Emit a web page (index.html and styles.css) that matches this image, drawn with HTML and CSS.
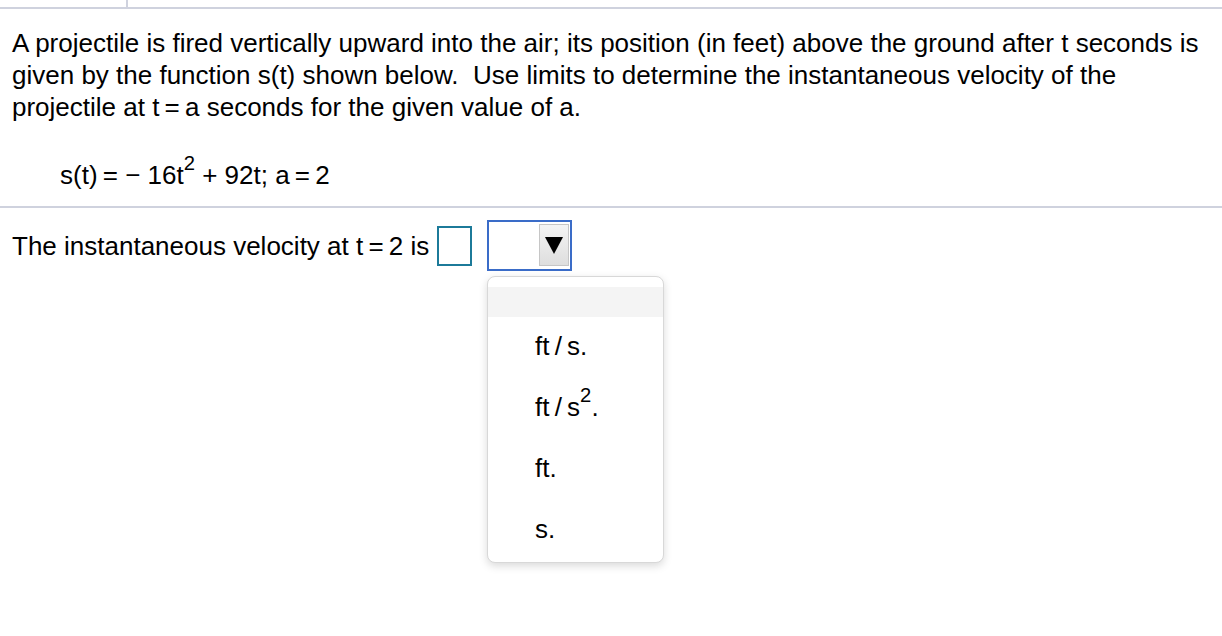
FILE: index.html
```html
<!DOCTYPE html>
<html lang="en">
<head>
    <meta charset="UTF-8">
    <title>Instantaneous velocity</title>
    <link rel="stylesheet" href="styles.css">
</head>
<body>
    <div class="topbar">
        <span class="tab"></span>
    </div>

    <div class="question">
        <p class="prompt">A projectile is fired vertically upward into the air; its position (in feet) above the ground after t seconds is given by the function s(t) shown below.&nbsp; Use limits to determine the instantaneous velocity of the projectile at t&#8201;=&#8201;a seconds for the given value of a.</p>
        <p class="formula">s(t)&#8201;= &minus; 16t<sup>2</sup> + 92t; a&#8201;=&#8201;2</p>
    </div>

    <div class="answer">
        <div class="answer-row">
            <span class="answer-text">The instantaneous velocity at t&#8201;=&#8201;2 is</span>
            <span class="blank"></span>
            <span class="select">
                <span class="arrow"><span class="tri"></span></span>
            </span>
        </div>

        <ul class="menu">
            <li class="item active"></li>
            <li class="item">ft&#8201;/&#8201;s.</li>
            <li class="item">ft&#8201;/&#8201;s<sup>2</sup>.</li>
            <li class="item">ft.</li>
            <li class="item">s.</li>
        </ul>
    </div>
</body>
</html>
```

FILE: styles.css
```css
body {
    margin: 0;
    min-height: 636px;
    font-family: "Liberation Sans", Arial, sans-serif;
    color: #000;
    background: #fff;
}

.topbar {
    position: relative;
    height: 7px;
    border-bottom: 2px solid #cfd2de;
}

.tab {
    position: absolute;
    left: 126px;
    top: 0;
    width: 2px;
    height: 7px;
    background: #cfd2de;
}

.question {
    padding: 0 12px;
    border-bottom: 2px solid #cfd2de;
}

.prompt {
    margin: 0;
    padding-top: 18px;
    font-size: 26px;
    line-height: 32px;
}

.formula {
    margin: 0;
    padding: 36px 0 15px 48px;
    font-size: 26px;
    line-height: 32px;
}

sup {
    font-size: 0.78em;
    line-height: 0;
    vertical-align: 0.68em;
}

.answer {
    position: relative;
    min-height: 420px;
    padding: 12px 12px;
    font-size: 26px;
}

.answer-row {
    display: flex;
    align-items: center;
}

.answer-text {
    line-height: 32px;
}

.blank {
    width: 31px;
    height: 36px;
    margin-left: 8px;
    border: 2px solid #1c7a99;
}

.select {
    display: flex;
    justify-content: flex-end;
    align-items: flex-start;
    width: 81px;
    height: 47px;
    margin-left: 15px;
    border: 2px solid #3a6cc8;
}

.arrow {
    display: flex;
    justify-content: center;
    align-items: center;
    width: 30px;
    height: 42px;
    margin: 2px 1px 0 0;
    background: linear-gradient(#f4f4f4, #dedede);
    border: 1px solid #c6c6c6;
    box-sizing: border-box;
}

.tri {
    width: 0;
    height: 0;
    border-left: 9px solid transparent;
    border-right: 9px solid transparent;
    border-top: 17px solid #000;
}

.menu {
    position: absolute;
    left: 487px;
    top: 68px;
    width: 177px;
    margin: 0;
    padding: 10px 0 1px;
    list-style: none;
    background: #fff;
    border: 1px solid #d8d8d8;
    border-radius: 8px;
    box-shadow: 0 3px 8px rgba(0, 0, 0, 0.15);
    box-sizing: border-box;
}

.item {
    height: 61px;
    padding-left: 47px;
    font-size: 26px;
    line-height: 58px;
}

.item.active {
    height: 30px;
    background: #f4f4f4;
}
```
